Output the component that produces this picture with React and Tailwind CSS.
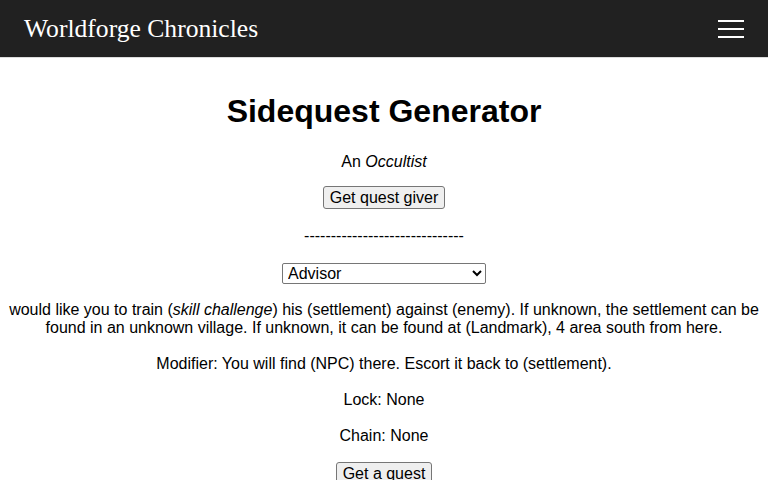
import { useState } from 'react';

const sans = { fontFamily: '"Liberation Sans", Arial, sans-serif' };

const Header = () => (
  <header className="flex h-[57px] items-center justify-between bg-[#212121] pl-6 pr-6 shadow-[0_1px_0_#dcdcdc]">
    <span className="mt-[2px] text-[25.6px] text-white" style={{ fontFamily: '"Liberation Serif", "Times New Roman", serif' }}>
      Worldforge Chronicles
    </span>
    <button className="flex w-[26px] flex-col gap-[6px]" aria-label="menu">
      <span className="block h-[2px] w-full bg-white"></span>
      <span className="block h-[2px] w-full bg-white"></span>
      <span className="block h-[2px] w-full bg-white"></span>
    </button>
  </header>
);

const btn = 'h-[23px] rounded-[3px] border border-[#767676] bg-[#efefef] px-[6px] text-[16px] leading-[18px] text-black';

export default function App() {
  const [giver, setGiver] = useState('Advisor');

  return (
    <div className="min-h-[480px] bg-white text-black" style={sans}>
      <Header />
      <main className="flex flex-col items-center text-center text-[16px] leading-[18px]">
        <h1 className="mt-[36px] text-[32px] font-bold leading-[37px]">Sidequest Generator</h1>
        <p className="mt-[23px]">
          An <i>Occultist</i>
        </p>
        <button className={`${btn} mt-[15px]`}>Get quest giver</button>
        <p className="mt-[18px]">------------------------------</p>
        <select
          value={giver}
          onChange={(e) => setGiver(e.target.value)}
          className="mt-[18px] h-[21px] w-[204px] rounded-[2px] border border-[#767676] bg-white pl-[1px] text-[16px] leading-[18px]"
        >
          <option>Advisor</option>
          <option>Merchant</option>
          <option>Priest</option>
        </select>
        <p className="mt-[17px]">
          would like you to train (<i>skill challenge</i>) his (settlement) against (enemy). If unknown, the settlement can be
          found in an unknown village. If unknown, it can be found at (Landmark), 4 area south from here.
        </p>
        <p className="mt-[18px]">Modifier: You will find (NPC) there. Escort it back to (settlement).</p>
        <p className="mt-[18px]">Lock: None</p>
        <p className="mt-[18px]">Chain: None</p>
        <button className={`${btn} mt-[17px]`}>Get a quest</button>
      </main>
    </div>
  );
}
